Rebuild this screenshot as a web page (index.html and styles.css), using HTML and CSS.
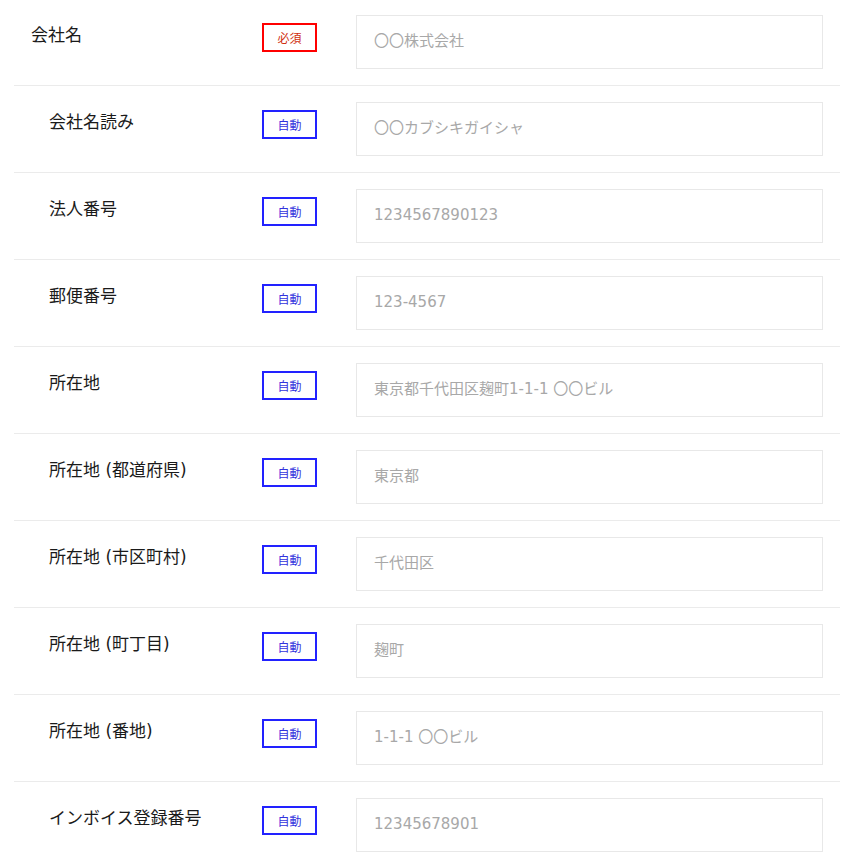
FILE: index.html
```html
<!DOCTYPE html>
<html lang="ja">
<head>
<meta charset="utf-8">
<link rel="stylesheet" href="styles.css">
</head>
<body>
<div class="form">
  <div class="row">
    <div class="label main">会社名</div>
    <span class="badge req">必須</span>
    <input class="field" placeholder="〇〇株式会社">
  </div>
  <div class="row">
    <div class="label">会社名読み</div>
    <span class="badge auto">自動</span>
    <input class="field" placeholder="〇〇カブシキガイシャ">
  </div>
  <div class="row">
    <div class="label">法人番号</div>
    <span class="badge auto">自動</span>
    <input class="field" placeholder="1234567890123">
  </div>
  <div class="row">
    <div class="label">郵便番号</div>
    <span class="badge auto">自動</span>
    <input class="field" placeholder="123-4567">
  </div>
  <div class="row">
    <div class="label">所在地</div>
    <span class="badge auto">自動</span>
    <input class="field" placeholder="東京都千代田区麹町1-1-1 〇〇ビル">
  </div>
  <div class="row">
    <div class="label">所在地 (都道府県)</div>
    <span class="badge auto">自動</span>
    <input class="field" placeholder="東京都">
  </div>
  <div class="row">
    <div class="label">所在地 (市区町村)</div>
    <span class="badge auto">自動</span>
    <input class="field" placeholder="千代田区">
  </div>
  <div class="row">
    <div class="label">所在地 (町丁目)</div>
    <span class="badge auto">自動</span>
    <input class="field" placeholder="麹町">
  </div>
  <div class="row">
    <div class="label">所在地 (番地)</div>
    <span class="badge auto">自動</span>
    <input class="field" placeholder="1-1-1 〇〇ビル">
  </div>
  <div class="row">
    <div class="label">インボイス登録番号</div>
    <span class="badge auto">自動</span>
    <input class="field" placeholder="12345678901">
  </div>
</div>
</body>
</html>
```
FILE: styles.css
```css
html, body {
  margin: 0;
  padding: 0;
  background: #fff;
}
body {
  font-family: "Noto Sans CJK JP", "Noto Sans", sans-serif;
  color: #222;
}
.form {
  margin: -1px 20px 0 14px;
}
.row {
  display: flex;
  align-items: flex-start;
  padding: 16px 17px 16px 0;
  border-bottom: 1px solid #ebebeb;
}
.label {
  box-sizing: border-box;
  width: 248px;
  padding-left: 35px;
  margin-top: 6px;
  font-family: "DejaVu Sans", "Noto Sans CJK JP", sans-serif;
  font-size: 17px;
  line-height: 29px;
  color: #1a1a1a;
}
.label.main {
  padding-left: 17px;
}
.badge {
  box-sizing: border-box;
  width: 55px;
  height: 29px;
  margin-top: 8px;
  display: flex;
  align-items: center;
  justify-content: center;
  font-size: 12px;
  border: 2px solid;
}
.badge.req {
  border-color: #ff0000;
  color: #d03010;
}
.badge.auto {
  border-color: #2222ff;
  color: #3333dd;
}
.field {
  box-sizing: border-box;
  flex: 1;
  margin-left: 39px;
  height: 54px;
  border: 1px solid #e8e8e8;
  padding: 0 17px 3px;
  font-family: "DejaVu Sans", "Noto Sans CJK JP", sans-serif;
  font-size: 15px;
  outline: none;
  background: #fff;
}
.field::placeholder {
  color: #a8a8a8;
  opacity: 1;
}
```
